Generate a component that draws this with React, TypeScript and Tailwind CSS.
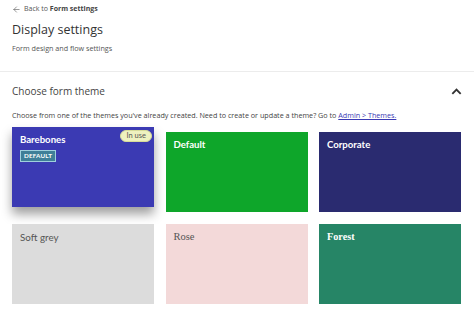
import { ArrowLeft } from 'lucide-react';

type Theme = {
  id: string;
  name: string;
  card: string;
  title: string;
  inUse?: boolean;
  isDefault?: boolean;
};

// Themes shown in the picker, in grid order
const themes: Theme[] = [
  {
    id: 'barebones',
    name: 'Barebones',
    card: 'bg-[#3b3ab3] -translate-y-[5px] shadow-[0_7px_10px_rgba(0,0,0,0.38)]',
    title: "font-['Lato'] font-bold text-[9.6px] text-white",
    inUse: true,
    isDefault: true,
  },
  { id: 'default', name: 'Default', card: 'bg-[#0ea62a]', title: "font-['Lato'] font-bold text-[9.6px] text-white" },
  { id: 'corporate', name: 'Corporate', card: 'bg-[#2a2b70]', title: "font-['Lato'] font-bold text-[9.6px] text-white" },
  { id: 'soft-grey', name: 'Soft grey', card: 'bg-[#dcdcdc]', title: "font-['Lato'] text-[9.8px] text-[#555]" },
  { id: 'rose', name: 'Rose', card: 'bg-[#f3d9d9]', title: "font-['Liberation_Serif'] text-[10.5px] text-[#555]" },
  { id: 'forest', name: 'Forest', card: 'bg-[#268566]', title: "font-['Liberation_Serif'] font-bold text-[10.2px] text-white" },
];

function ThemeCard({ theme }: { theme: Theme }) {
  return (
    <div className={`relative flex h-[80px] flex-col items-start px-2 pt-[7px] ${theme.card}`}>
      <p className={`leading-[12px] ${theme.title}`}>{theme.name}</p>
      {theme.isDefault && (
        <span className="mt-[4px] border border-[#9fd0dd] bg-[#3f7f98] px-[3px] py-px font-['Lato'] text-[6.3px] font-bold leading-[8px] tracking-wide text-white">
          DEFAULT
        </span>
      )}
      {theme.inUse && (
        <span className="absolute right-[2px] top-[3px] rounded-full border border-[#d7dc9a] bg-[#eef1bf] px-[5px] font-['Lato'] text-[7.5px] leading-[10px] text-[#555]">
          In use
        </span>
      )}
    </div>
  );
}

export default function App() {
  return (
    <div className="h-[312px] w-[474px] overflow-hidden bg-white font-['Open_Sans'] text-[#333]">
      {/* Page header */}
      <div className="px-3 pt-[4px]">
        <a className="flex h-[10px] items-center gap-[3px] text-[7px] leading-[10px] text-[#555]">
          <ArrowLeft size={9} strokeWidth={1.6} />
          <span>
            Back to <span className="font-bold text-[#444]">Form settings</span>
          </span>
        </a>
        <h1 className="mt-[8px] text-[12.5px] leading-[16px] text-[#333]">Display settings</h1>
        <p className="mt-[5px] text-[7.2px] leading-[10px] text-[#555]">Form design and flow settings</p>
      </div>

      {/* Theme section */}
      <div className="mt-[18px] border-t border-[#ececec] px-3">
        <div className="mt-[12px] flex h-[14px] items-center justify-between">
          <h2 className="text-[10px] leading-[14px] text-[#444]">Choose form theme</h2>
          <svg width="13" height="13" viewBox="0 0 14 14" className="mr-[-1px]">
            <polyline points="2.5,9.5 7,5 11.5,9.5" fill="none" stroke="#333" strokeWidth="2" />
          </svg>
        </div>
        <p className="mt-[12px] text-[7.2px] leading-[10px] text-[#444]">
          Choose from one of the themes you've already created. Need to create or update a theme? Go to{' '}
          <span className="text-[#3a3ab5] underline">Admin &gt; Themes.</span>
        </p>
        <div className="mt-[12px] grid w-[449px] grid-cols-3 gap-x-[11.5px] gap-y-[12px]">
          {themes.map((t) => (
            <ThemeCard key={t.id} theme={t} />
          ))}
        </div>
      </div>
    </div>
  );
}
